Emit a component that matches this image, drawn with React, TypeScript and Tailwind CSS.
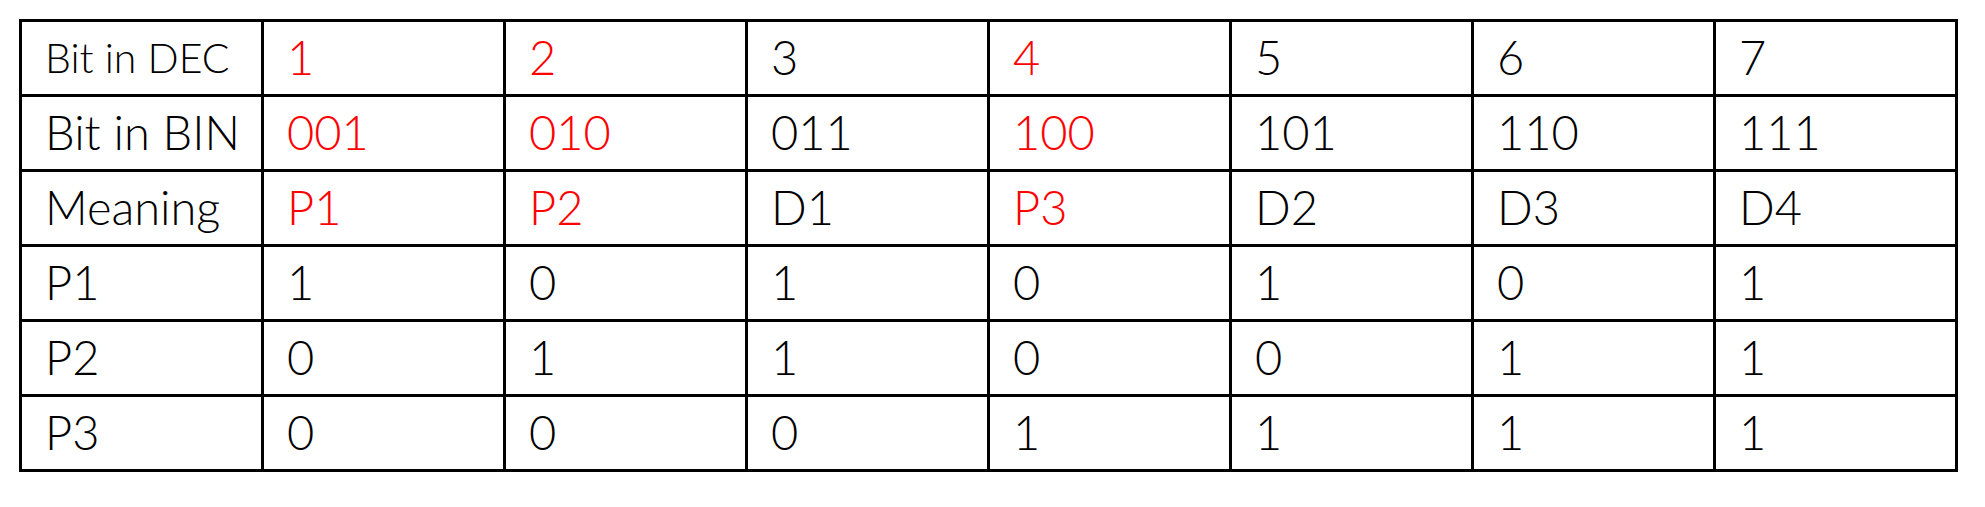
import React from "react";

type Cell = { t: string; red?: boolean; small?: boolean };

const rows: Cell[][] = [
  [
    { t: "Bit in DEC", small: true },
    { t: "1", red: true },
    { t: "2", red: true },
    { t: "3" },
    { t: "4", red: true },
    { t: "5" },
    { t: "6" },
    { t: "7" },
  ],
  [
    { t: "Bit in BIN" },
    { t: "001", red: true },
    { t: "010", red: true },
    { t: "011" },
    { t: "100", red: true },
    { t: "101" },
    { t: "110" },
    { t: "111" },
  ],
  [
    { t: "Meaning" },
    { t: "P1", red: true },
    { t: "P2", red: true },
    { t: "D1" },
    { t: "P3", red: true },
    { t: "D2" },
    { t: "D3" },
    { t: "D4" },
  ],
  ["P1", "1", "0", "1", "0", "1", "0", "1"].map((t) => ({ t })),
  ["P2", "0", "1", "1", "0", "0", "1", "1"].map((t) => ({ t })),
  ["P3", "0", "0", "0", "1", "1", "1", "1"].map((t) => ({ t })),
];

export default function App() {
  return (
    <div className="w-[1985px] h-[507px] bg-white pt-[19px] pl-[19px]" style={{ fontFamily: "Lato, 'Noto Sans', sans-serif" }}>
      <div className="grid grid-cols-[repeat(8,242px)] grid-rows-[repeat(6,75px)] border-l-[3px] border-t-[3px] border-black w-fit">
        {rows.flatMap((row, ri) =>
          row.map((c, ci) => (
            <div
              key={`${ri}-${ci}`}
              className={`border-r-[3px] border-b-[3px] border-black flex items-center pl-[23px] pb-[2px] font-light leading-none ${
                c.red ? "text-[#ff0000]" : "text-black"
              } ${c.small ? "text-[41px]" : "text-[47px]"}`}
            >
              {c.t}
            </div>
          ))
        )}
      </div>
    </div>
  );
}
